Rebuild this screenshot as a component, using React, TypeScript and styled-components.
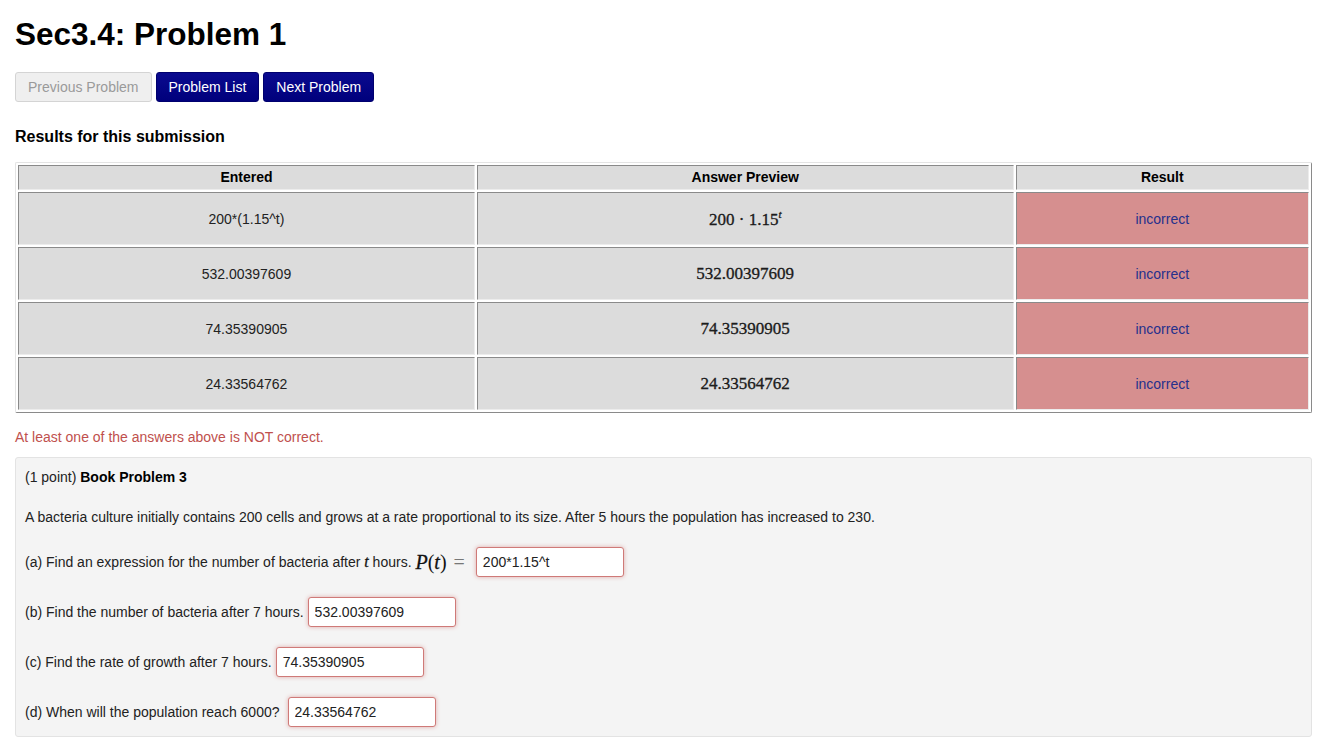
import React from 'react';
import styled, { createGlobalStyle } from 'styled-components';

const GlobalStyle = createGlobalStyle`
  body {
    margin: 0;
    background: #fff;
    font-family: "Liberation Sans", Arial, sans-serif;
    font-size: 14px;
    color: #222;
  }
`;

const Page = styled.div`
  padding: 12px 11px 20px 15px;
`;

const Title = styled.h1`
  margin: 0;
  font-size: 31.5px;
  font-weight: bold;
  color: #000;
  line-height: 44px;
`;

const NavBar = styled.div`
  display: flex;
  gap: 4px;
  margin-top: 16px;
`;

const NavButton = styled.button<{ $disabled?: boolean }>`
  height: 30px;
  padding: 0 12px;
  font-family: "Liberation Sans", Arial, sans-serif;
  font-size: 14px;
  border-radius: 3px;
  border: 1px solid ${(p) => (p.$disabled ? '#d4d4d4' : '#00006e')};
  background: ${(p) => (p.$disabled ? '#efefef' : 'linear-gradient(#0a0a8f, #00007c)')};
  color: ${(p) => (p.$disabled ? '#9a9a9a' : '#fff')};
  cursor: ${(p) => (p.$disabled ? 'default' : 'pointer')};
`;

const SectionHeading = styled.h3`
  margin: 25px 0 0;
  font-size: 16px;
  font-weight: bold;
  color: #000;
  line-height: 20px;
`;

const ResultsTable = styled.table`
  width: 100%;
  margin-top: 15px;
  border-collapse: separate;
  border-spacing: 2px;
  border-top: 1px solid #e4e4e4;
  border-left: 1px solid #e4e4e4;
  border-right: 1px solid #8a8a8a;
  border-bottom: 1px solid #8a8a8a;
  border-radius: 2px;
`;

const HeadCell = styled.th<{ $w: string }>`
  width: ${(p) => p.$w};
  background: #dcdcdc;
  color: #000;
  font-size: 14px;
  font-weight: bold;
  padding: 3px 4px;
  line-height: 17px;
  border-top: 1px solid #8a8a8a;
  border-left: 1px solid #8a8a8a;
  border-right: 1px solid #ececec;
  border-bottom: 1px solid #ececec;
`;

const Cell = styled.td<{ $wrong?: boolean; $math?: boolean }>`
  background: ${(p) => (p.$wrong ? '#d68f8f' : '#dcdcdc')};
  color: ${(p) => (p.$wrong ? '#25308c' : '#222')};
  text-align: center;
  height: 51px;
  padding: 0 4px;
  font-family: ${(p) => (p.$math ? '"Liberation Serif", "DejaVu Serif", serif' : 'inherit')};
  font-size: ${(p) => (p.$math ? '17px' : '14px')};
  -webkit-text-stroke: ${(p) => (p.$math ? '0.3px #111' : '0')};
  border-top: 1px solid #8a8a8a;
  border-left: 1px solid #8a8a8a;
  border-right: 1px solid #ececec;
  border-bottom: 1px solid #ececec;
`;

const Warning = styled.div`
  margin-top: 14px;
  color: #c0504d;
  font-size: 14px;
  line-height: 20px;
`;

const Well = styled.div`
  margin-top: 10px;
  background: #f4f4f4;
  border: 1px solid #e3e3e3;
  border-radius: 3px;
  padding: 9px 9px;
  line-height: 20px;
`;

const Line = styled.div<{ $gap?: number }>`
  display: flex;
  align-items: center;
  margin-top: ${(p) => p.$gap ?? 0}px;
  min-height: 20px;
  white-space: pre;
`;

const AnswerRow = styled(Line)`
  height: 30px;
`;

const Strong = styled.b`
  color: #000;
`;

const MathVar = styled.span<{ $size?: number }>`
  font-family: "Liberation Serif", "DejaVu Serif", serif;
  font-style: italic;
  font-size: ${(p) => p.$size ?? 16}px;
  color: #111;
  -webkit-text-stroke: 0.3px #111;
`;

const MathUp = styled.span`
  font-family: "Liberation Serif", "DejaVu Serif", serif;
  font-size: 20px;
  color: #111;
`;

const Equals = styled(MathUp)`
  margin: 0 8px 0 7px;
  color: #777;
`;

const AnswerInput = styled.input<{ $ml?: number }>`
  width: 148px;
  height: 30px;
  box-sizing: border-box;
  margin-left: ${(p) => p.$ml ?? 4}px;
  padding: 4px 6px;
  font-family: "Liberation Sans", Arial, sans-serif;
  font-size: 14px;
  color: #222;
  background: #fff;
  border: 1px solid #cf7a78;
  border-radius: 3px;
  box-shadow: 0 0 4px rgba(200, 80, 77, 0.45);
  outline: none;
`;

const rows = [
  { entered: '200*(1.15^t)', preview: 'expr' },
  { entered: '532.00397609', preview: '532.00397609' },
  { entered: '74.35390905', preview: '74.35390905' },
  { entered: '24.33564762', preview: '24.33564762' },
];

export default function App() {
  return (
    <Page>
      <GlobalStyle />
      <Title>Sec3.4: Problem 1</Title>
      <NavBar>
        <NavButton $disabled>Previous Problem</NavButton>
        <NavButton>Problem List</NavButton>
        <NavButton>Next Problem</NavButton>
      </NavBar>

      <SectionHeading>Results for this submission</SectionHeading>
      <ResultsTable>
        <thead>
          <tr>
            <HeadCell $w="35.5%">Entered</HeadCell>
            <HeadCell $w="41.7%">Answer Preview</HeadCell>
            <HeadCell $w="22.8%">Result</HeadCell>
          </tr>
        </thead>
        <tbody>
          {rows.map((r) => (
            <tr key={r.entered}>
              <Cell>{r.entered}</Cell>
              <Cell $math>
                {r.preview === 'expr' ? (
                  <>
                    200 · 1.15<sup style={{ fontSize: 11, fontStyle: 'italic' }}>t</sup>
                  </>
                ) : (
                  r.preview
                )}
              </Cell>
              <Cell $wrong>incorrect</Cell>
            </tr>
          ))}
        </tbody>
      </ResultsTable>

      <Warning>At least one of the answers above is NOT correct.</Warning>

      <Well>
        <Line>
          (1 point) <Strong>Book Problem 3</Strong>
        </Line>
        <Line $gap={20}>
          A bacteria culture initially contains 200 cells and grows at a rate proportional to its size. After 5 hours the population has increased to 230.
        </Line>
        <AnswerRow $gap={20}>
          (a) Find an expression for the number of bacteria after <MathVar>t</MathVar> hours.{' '}
          <MathVar $size={20}>P</MathVar>
          <MathUp>(</MathUp>
          <MathVar $size={20}>t</MathVar>
          <MathUp>)</MathUp>
          <Equals>=</Equals>
          <AnswerInput $ml={3} defaultValue="200*1.15^t" />
        </AnswerRow>
        <AnswerRow $gap={20}>
          (b) Find the number of bacteria after 7 hours.
          <AnswerInput defaultValue="532.00397609" />
        </AnswerRow>
        <AnswerRow $gap={20}>
          (c) Find the rate of growth after 7 hours.
          <AnswerInput defaultValue="74.35390905" />
        </AnswerRow>
        <AnswerRow $gap={20}>
          (d) When will the population reach 6000?
          <AnswerInput $ml={8} defaultValue="24.33564762" />
        </AnswerRow>
      </Well>
    </Page>
  );
}
